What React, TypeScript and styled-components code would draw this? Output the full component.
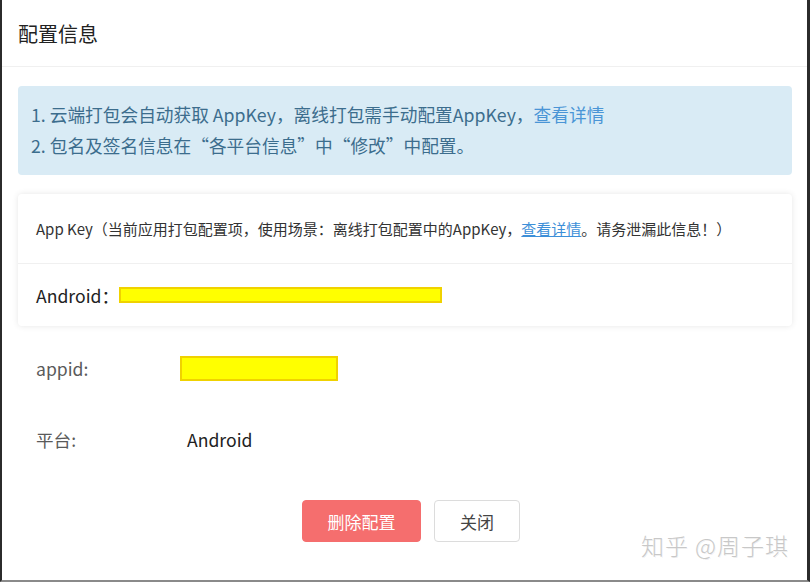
import React, { ReactElement } from 'react'
import styled, { createGlobalStyle } from 'styled-components'

const GlobalStyle = createGlobalStyle`
  html, body {
    margin: 0;
    padding: 0;
    background: #ffffff;
  }
  body {
    font-family: "Noto Sans CJK SC", "Noto Sans", sans-serif;
  }
`

const Frame = styled.div`
  position: relative;
  box-sizing: border-box;
  width: 810px;
  height: 582px;
  border-left: 2px solid #2b2b2b;
  border-right: 3px solid #2b2b2b;
  border-bottom: 2px solid #8a8a8a;
  background: #ffffff;
  overflow: hidden;
`

const Header = styled.div`
  height: 66px;
  display: flex;
  align-items: center;
  padding-left: 16px;
  border-bottom: 1px solid #f0f0f0;
`

const Title = styled.h2`
  margin: 0;
  font-size: 20px;
  font-weight: 400;
  color: #222;
`

const Body = styled.div`
  padding: 19px 15px 0 16px;
`

const Alert = styled.div`
  background: #d9ebf5;
  border-radius: 4px;
  padding: 13px 13px 14px;
  color: #3c6d8d;
  font-size: 17.7px;
  line-height: 31px;
`

const Line = styled.div`
  white-space: nowrap;
`

const Link = styled.a<{ underline?: boolean }>`
  color: ${({ underline }) => (underline ? '#3d8fd8' : '#4a95d6')};
  text-decoration: ${({ underline }) => (underline ? 'underline' : 'none')};
  cursor: pointer;
`

const Card = styled.div`
  margin-top: 19px;
  border-radius: 4px;
  background: #fff;
  box-shadow: 0 0 6px rgba(0, 0, 0, 0.1);
`

const CardHeader = styled.div`
  height: 69px;
  display: flex;
  align-items: center;
  padding-left: 18px;
  border-bottom: 1px solid #f0f0f0;
  font-size: 15px;
  color: #333;
  white-space: nowrap;
`

const CardRow = styled.div`
  height: 62px;
  display: flex;
  align-items: center;
  padding-left: 18px;
  font-size: 17.6px;
  color: #222;
`

const Redact = styled.span<{ w: number; h: number }>`
  display: inline-block;
  box-sizing: border-box;
  width: ${({ w }) => w}px;
  height: ${({ h }) => h}px;
  background: #ffff00;
  border: 2px solid #f0d200;
`

const InfoRow = styled.div<{ gap: number }>`
  display: flex;
  align-items: center;
  height: 56px;
  margin-top: ${({ gap }) => gap}px;
  padding-left: 18px;
  font-size: 17.6px;
`

const Label = styled.span`
  width: 144px;
  color: #5a5a5a;
`

const Value = styled.span<{ indent?: number }>`
  padding-left: ${({ indent }) => indent ?? 0}px;
  color: #222;
`

const Footer = styled.div`
  display: flex;
  justify-content: center;
  gap: 13px;
  margin-top: 33px;
  padding-left: 12px;
`

const Button = styled.button<{ danger?: boolean }>`
  height: 42px;
  padding: 0 24px;
  min-width: ${({ danger }) => (danger ? 119 : 86)}px;
  border-radius: 4px;
  font-family: inherit;
  font-size: 17px;
  cursor: pointer;
  border: 1px solid ${({ danger }) => (danger ? '#f56e6e' : '#dcdcdc')};
  background: ${({ danger }) => (danger ? '#f56e6e' : '#fff')};
  color: ${({ danger }) => (danger ? '#fff' : '#444')};
`

const Watermark = styled.div`
  position: absolute;
  right: 18px;
  bottom: 18px;
  font-size: 23px;
  font-weight: 300;
  color: #c8c8c8;
  letter-spacing: 1px;
  text-shadow: 1px 1px 0 rgba(0, 0, 0, 0.06);
`

const App = (): ReactElement => (
  <Frame>
    <GlobalStyle />
    <Header>
      <Title>配置信息</Title>
    </Header>
    <Body>
      <Alert>
        <Line>
          1. 云端打包会自动获取 AppKey，离线打包需手动配置AppKey，<Link>查看详情</Link>
        </Line>
        <Line>2. 包名及签名信息在“各平台信息”中“修改”中配置。</Line>
      </Alert>
      <Card>
        <CardHeader>
          App Key（当前应用打包配置项，使用场景：离线打包配置中的AppKey，
          <Link underline>查看详情</Link>。请务泄漏此信息！）
        </CardHeader>
        <CardRow>
          Android：<Redact w={323} h={16} />
        </CardRow>
      </Card>
      <InfoRow gap={14}>
        <Label>appid:</Label>
        <Redact w={158} h={25} />
      </InfoRow>
      <InfoRow gap={15}>
        <Label>平台:</Label>
        <Value indent={7}>Android</Value>
      </InfoRow>
      <Footer>
        <Button danger>删除配置</Button>
        <Button>关闭</Button>
      </Footer>
    </Body>
    <Watermark>知乎 @周子琪</Watermark>
  </Frame>
)

export default App
